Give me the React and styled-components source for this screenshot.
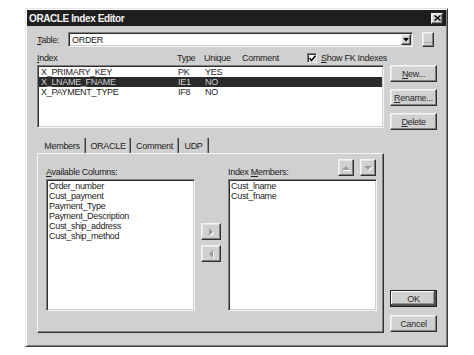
import React from "react";
import styled, { createGlobalStyle, css } from "styled-components";

const GlobalStyle = createGlobalStyle`
  body {
    margin: 0;
    background: #fff;
    font-family: "Liberation Sans", Arial, sans-serif;
    color: #1c1c1c;
  }
`;

const raised = css`
  border: 1px solid;
  border-color: #f4f4f4 #303030 #303030 #f4f4f4;
  box-shadow: inset -1px -1px #808080, inset 1px 1px #e6e6e6;
`;

const sunken = css`
  border: 1px solid;
  border-color: #808080 #f4f4f4 #f4f4f4 #808080;
  box-shadow: inset 1px 1px #303030, inset -1px -1px #d0d0d0;
`;

const textStyle = css`
  font-size: 9px;
  letter-spacing: -0.3px;
  line-height: 10px;
  white-space: nowrap;
`;

const Screen = styled.div`
  padding: 8px 0 0 25px;
`;

const Window = styled.div`
  width: 423px;
  box-sizing: border-box;
  background: #d0d0d0;
  border: 1px solid;
  border-color: #e4e4e4 #404040 #404040 #e4e4e4;
  box-shadow: inset 1px 1px #fff, inset -1px -1px #808080;
  padding: 1px;
`;

const TitleBar = styled.div`
  height: 16px;
  background: #1e1e1e;
  display: flex;
  align-items: center;
  justify-content: space-between;
  padding: 0 3px 0 2px;
`;

const Title = styled.span`
  color: #f2f2f2;
  font-weight: bold;
  font-size: 10px;
  letter-spacing: -0.4px;
`;

const CloseBox = styled.div`
  width: 12px;
  height: 11px;
  box-sizing: border-box;
  background: #d0d0d0;
  ${raised};
  display: flex;
  align-items: center;
  justify-content: center;
`;

const Body = styled.div`
  padding: 6px 9px 12px 10px;
`;

const TableRow = styled.div`
  display: flex;
  align-items: center;
  height: 15px;
`;

const Label = styled.span`
  ${textStyle};
  width: ${(p) => p.$width || "auto"};
  flex: none;
`;

const Key = styled.span`
  text-decoration: underline;
`;

const Combo = styled.div`
  width: 345px;
  height: 15px;
  box-sizing: border-box;
  background: #fff;
  ${sunken};
  display: flex;
  align-items: center;
  justify-content: space-between;
  padding: 0 1px 0 3px;
  margin-right: 9px;
  ${textStyle};
`;

const DropButton = styled.div`
  width: 10px;
  height: 11px;
  box-sizing: border-box;
  background: #d0d0d0;
  ${raised};
  display: flex;
  align-items: center;
  justify-content: center;
`;

const SmallButton = styled.div`
  width: ${(p) => p.$w}px;
  height: ${(p) => p.$h}px;
  box-sizing: border-box;
  background: #d0d0d0;
  ${raised};
  display: flex;
  align-items: center;
  justify-content: center;
  color: #555;
  ${textStyle};
  letter-spacing: 0;
`;

const HeaderRow = styled.div`
  display: flex;
  align-items: center;
  height: 12px;
  margin-top: 5px;
  width: 347px;
`;

const CheckLabel = styled.label`
  display: flex;
  align-items: center;
  gap: 4px;
  flex: none;
  ${textStyle};
`;

const CheckBox = styled.span`
  width: 10px;
  height: 10px;
  box-sizing: border-box;
  background: #fff;
  ${sunken};
  display: flex;
  align-items: center;
  justify-content: center;
`;

const Section = styled.div`
  display: flex;
  gap: 6px;
  margin-top: ${(p) => p.$top}px;
`;

const ListBox = styled.div`
  width: ${(p) => p.$w}px;
  height: ${(p) => p.$h}px;
  box-sizing: border-box;
  background: #fff;
  ${sunken};
  padding: 1px;
  flex: none;
`;

const IndexRow = styled.div`
  display: grid;
  grid-template-columns: 137px 27px 38px 1fr;
  padding-left: 2px;
  height: 10px;
  ${textStyle};
  background: ${(p) => (p.$selected ? "#2a2a2a" : "transparent")};
  color: ${(p) => (p.$selected ? "#cfcfcf" : "#1c1c1c")};
`;

const ItemRow = styled.div`
  padding-left: 1px;
  height: 10px;
  ${textStyle};
`;

const ButtonColumn = styled.div`
  width: 47px;
  display: flex;
  flex-direction: column;
  justify-content: ${(p) => (p.$bottom ? "flex-end" : "flex-start")};
  gap: ${(p) => p.$gap}px;
  padding-bottom: ${(p) => (p.$bottom ? 1 : 0)}px;
`;

const PushButton = styled.button`
  width: 47px;
  height: 17px;
  padding: 0;
  background: #d0d0d0;
  ${raised};
  ${(p) =>
    p.$default &&
    css`
      border-color: #202020;
      box-shadow: inset -2px -2px #505050, inset 1px 1px #fff, inset -3px -3px #909090;
    `};
  font-family: inherit;
  ${textStyle};
  color: #2a2a2a;
`;

const TabArea = styled.div`
  width: 347px;
`;

const TabStrip = styled.div`
  display: flex;
  height: 15px;
  padding-left: 2px;
`;

const Tab = styled.div`
  width: ${(p) => p.$w}px;
  box-sizing: border-box;
  display: flex;
  align-items: center;
  justify-content: center;
  border-right: 1px solid #404040;
  box-shadow: inset -1px 0 #8a8a8a;
  ${textStyle};
`;

const Panel = styled.div`
  height: 180px;
  box-sizing: border-box;
  background: #d0d0d0;
  border: 1px solid;
  border-color: #f4f4f4 #303030 #303030 #f4f4f4;
  box-shadow: inset -1px -1px #808080;
  padding: 5px 6px 0 8px;
  display: flex;
`;

const Column = styled.div`
  display: flex;
  flex-direction: column;
  width: 149px;
  margin-left: ${(p) => p.$ml || 0}px;
`;

const ColumnHead = styled.div`
  height: 20px;
  display: flex;
  align-items: flex-end;
  justify-content: space-between;
  padding-bottom: 2px;
  box-sizing: border-box;
`;

const Tools = styled.div`
  display: flex;
  gap: 6px;
  align-self: flex-start;
  margin-right: 1px;
`;

const Middle = styled.div`
  width: 20px;
  margin-left: 6px;
  padding-top: 64px;
  display: flex;
  flex-direction: column;
  gap: 5px;
`;

const Glyph = ({ points }) => (
  <svg width="8" height="8" viewBox="0 0 8 8">
    <polygon points={points} fill="#fff" transform="translate(1 1)" />
    <polygon points={points} fill="#9a9a9a" />
  </svg>
);

const indexes = [
  { name: "X_PRIMARY_KEY", type: "PK", unique: "YES" },
  { name: "X_LNAME_FNAME", type: "IE1", unique: "NO", selected: true },
  { name: "X_PAYMENT_TYPE", type: "IF8", unique: "NO" }
];

const available = [
  "Order_number",
  "Cust_payment",
  "Payment_Type",
  "Payment_Description",
  "Cust_ship_address",
  "Cust_ship_method"
];

const members = ["Cust_lname", "Cust_fname"];

const tabs = [
  { label: "Members", w: 47 },
  { label: "ORACLE", w: 45 },
  { label: "Comment", w: 48 },
  { label: "UDP", w: 30 }
];

export default function App() {
  return (
    <Screen>
      <GlobalStyle />
      <Window>
        <TitleBar>
          <Title>ORACLE Index Editor</Title>
          <CloseBox>
            <svg width="7" height="6" viewBox="0 0 7 6">
              <path d="M0.5 0.5 L6.5 5.5 M6.5 0.5 L0.5 5.5" stroke="#000" strokeWidth="1.4" />
            </svg>
          </CloseBox>
        </TitleBar>
        <Body>
          <TableRow>
            <Label $width="31px">
              <Key>T</Key>able:
            </Label>
            <Combo>
              <span>ORDER</span>
              <DropButton>
                <svg width="6" height="4" viewBox="0 0 6 4">
                  <polygon points="0,0 6,0 3,3.5" fill="#000" />
                </svg>
              </DropButton>
            </Combo>
            <SmallButton $w={12} $h={15}>...</SmallButton>
          </TableRow>

          <HeaderRow>
            <Label $width="140px">
              <Key>I</Key>ndex
            </Label>
            <Label $width="27px">Type</Label>
            <Label $width="38px">Unique</Label>
            <Label $width="65px">Comment</Label>
            <CheckLabel>
              <CheckBox>
                <svg width="7" height="7" viewBox="0 0 7 7">
                  <polyline points="0.5,3 2.5,5.5 6.5,0.8" fill="none" stroke="#000" strokeWidth="1.5" />
                </svg>
              </CheckBox>
              <span>
                <Key>S</Key>how FK Indexes
              </span>
            </CheckLabel>
          </HeaderRow>

          <Section $top={1}>
            <ListBox $w={347} $h={63}>
              {indexes.map((row) => (
                <IndexRow key={row.name} $selected={row.selected}>
                  <span>{row.name}</span>
                  <span>{row.type}</span>
                  <span>{row.unique}</span>
                  <span />
                </IndexRow>
              ))}
            </ListBox>
            <ButtonColumn $gap={7}>
              <PushButton>
                <Key>N</Key>ew...
              </PushButton>
              <PushButton>
                <Key>R</Key>ename...
              </PushButton>
              <PushButton>
                <Key>D</Key>elete
              </PushButton>
            </ButtonColumn>
          </Section>

          <Section $top={8}>
            <TabArea>
              <TabStrip>
                {tabs.map((t) => (
                  <Tab key={t.label} $w={t.w}>
                    {t.label}
                  </Tab>
                ))}
              </TabStrip>
              <Panel>
                <Column>
                  <ColumnHead>
                    <Label>
                      <Key>A</Key>vailable Columns:
                    </Label>
                  </ColumnHead>
                  <ListBox $w={149} $h={132}>
                    {available.map((c) => (
                      <ItemRow key={c}>{c}</ItemRow>
                    ))}
                  </ListBox>
                </Column>
                <Middle>
                  <SmallButton $w={20} $h={17}>
                    <Glyph points="2,0 6,4 2,8" />
                  </SmallButton>
                  <SmallButton $w={20} $h={17}>
                    <Glyph points="6,0 2,4 6,8" />
                  </SmallButton>
                </Middle>
                <Column $ml={7}>
                  <ColumnHead>
                    <Label>
                      Index <Key>M</Key>embers:
                    </Label>
                    <Tools>
                      <SmallButton $w={16} $h={17}>
                        <Glyph points="0,6 4,2 8,6" />
                      </SmallButton>
                      <SmallButton $w={16} $h={17}>
                        <Glyph points="0,2 8,2 4,6" />
                      </SmallButton>
                    </Tools>
                  </ColumnHead>
                  <ListBox $w={149} $h={132}>
                    {members.map((c) => (
                      <ItemRow key={c}>{c}</ItemRow>
                    ))}
                  </ListBox>
                </Column>
              </Panel>
            </TabArea>
            <ButtonColumn $bottom $gap={8}>
              <PushButton $default>OK</PushButton>
              <PushButton>Cancel</PushButton>
            </ButtonColumn>
          </Section>
        </Body>
      </Window>
    </Screen>
  );
}
